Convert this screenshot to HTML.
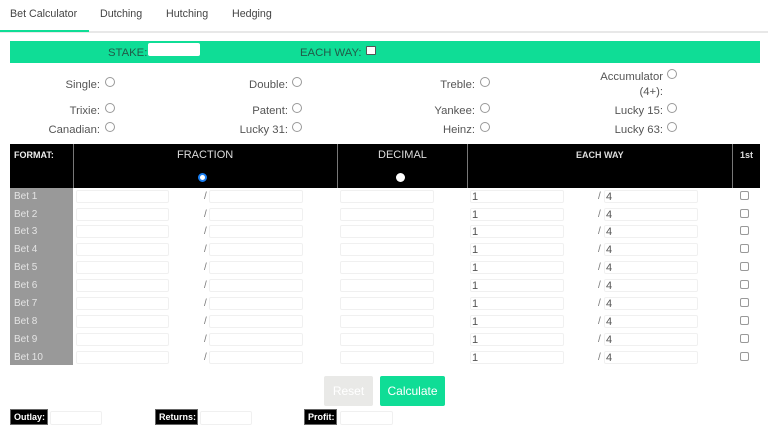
<!DOCTYPE html>
<html><head><meta charset="utf-8"><style>
html,body{margin:0;padding:0;background:#fff}
body{width:768px;height:444px;position:relative;overflow:hidden;font-family:"Liberation Sans",sans-serif;color:#555;font-size:11.5px}
.a{position:absolute;white-space:nowrap}
.r{text-align:right}
.rd{position:absolute;width:8px;height:8px;border:1px solid #999;border-radius:50%;background:#fff}
.row{position:absolute;left:0;width:768px;height:18px}
.i{position:absolute;top:0;height:11px;border:1px solid #f0f0f0;border-radius:2px;background:#fff;box-sizing:content-box;color:#555;font-size:11px;line-height:13px;padding-left:1px}
.i1{left:76px;width:90px}.i2{left:209px;width:91px}.i3{left:340px;width:91px}.i4{left:470px;width:91px}.i5{left:604px;width:91px}
.b{position:absolute;left:14px;top:0.5px;color:#e4e4e4;font-size:10px;line-height:12px}
.s1,.s2{position:absolute;top:1px;font-size:10px;line-height:12px;color:#777}
.s1{left:204px}.s2{left:598px}
.c{position:absolute;left:740px;top:1px;width:7px;height:7px;border:1px solid #999;border-radius:2px;background:#fff}
.sep{position:absolute;top:144px;width:1px;height:44px;background:#777}
.lab{position:absolute;top:409px;height:16px;background:#000;border:1px solid #666;box-sizing:border-box;color:#fff;font-weight:bold;font-size:9px;line-height:15px;padding-left:3px}
.out{position:absolute;top:411px;height:12px;border:1px solid #f0f0f0;border-radius:2px;background:#fff}
.t{font-size:10.7px;line-height:13px;color:#444;top:8px}
.l{line-height:14px;font-size:11.3px}
</style></head><body>
<div class="a t" style="left:10px">Bet Calculator</div>
<div class="a t" style="left:100px">Dutching</div>
<div class="a t" style="left:166px">Hutching</div>
<div class="a t" style="left:232px">Hedging</div>
<div class="a" style="left:0;top:31px;width:768px;height:2px;background:#e8e8e8"></div>
<div class="a" style="left:0;top:30px;width:89px;height:2px;background:#0fdd96"></div>

<div class="a" style="left:10px;top:41px;width:750px;height:22px;background:#0fdd96"></div>
<div class="a l" style="left:108px;top:46px;color:#225a48">STAKE:</div>
<div class="a" style="left:148px;top:43px;width:52px;height:13px;background:#fff;border-radius:2px"></div>
<div class="a l" style="left:300px;top:46px;color:#225a48">EACH WAY:</div>
<div class="a" style="left:366px;top:46px;width:8px;height:7px;background:#fff;border:1px solid #555;border-radius:1px"></div>

<div class="a r l" style="right:668px;top:78px">Single:</div><div class="rd" style="left:105px;top:77px"></div>
<div class="a r l" style="right:480px;top:78px">Double:</div><div class="rd" style="left:292px;top:77px"></div>
<div class="a r l" style="right:293px;top:78px">Treble:</div><div class="rd" style="left:480px;top:77px"></div>
<div class="a r l" style="right:105px;top:70px">Accumulator</div><div class="rd" style="left:667px;top:69px"></div>
<div class="a r l" style="right:105px;top:85px">(4+):</div>

<div class="a r l" style="right:668px;top:104px">Trixie:</div><div class="rd" style="left:105px;top:103px"></div>
<div class="a r l" style="right:480px;top:104px">Patent:</div><div class="rd" style="left:292px;top:103px"></div>
<div class="a r l" style="right:293px;top:104px">Yankee:</div><div class="rd" style="left:480px;top:103px"></div>
<div class="a r l" style="right:105px;top:104px">Lucky 15:</div><div class="rd" style="left:667px;top:103px"></div>

<div class="a r l" style="right:668px;top:123px">Canadian:</div><div class="rd" style="left:105px;top:122px"></div>
<div class="a r l" style="right:480px;top:123px">Lucky 31:</div><div class="rd" style="left:292px;top:122px"></div>
<div class="a r l" style="right:293px;top:123px">Heinz:</div><div class="rd" style="left:480px;top:122px"></div>
<div class="a r l" style="right:105px;top:123px">Lucky 63:</div><div class="rd" style="left:667px;top:122px"></div>

<div class="a" style="left:10px;top:144px;width:750px;height:44px;background:#000"></div>
<div class="sep" style="left:73px"></div><div class="sep" style="left:337px"></div><div class="sep" style="left:467px"></div><div class="sep" style="left:732px"></div>
<div class="a" style="left:14px;top:149px;color:#eee;font-weight:bold;font-size:9px;line-height:12px">FORMAT:</div>
<div class="a" style="left:177px;top:148px;color:#ddd;font-size:11px;line-height:14px">FRACTION</div>
<div class="a" style="left:378px;top:148px;color:#ddd;font-size:11px;line-height:14px">DECIMAL</div>
<div class="a" style="left:576px;top:149px;color:#ddd;font-weight:bold;font-size:9px;line-height:12px">EACH WAY</div>
<div class="a" style="left:740px;top:149px;color:#ddd;font-weight:bold;font-size:9px;line-height:12px">1st</div>
<div class="a" style="left:198px;top:173px;width:5px;height:5px;background:#fff;border:2px solid #1a7ef0;border-radius:50%"></div>
<div class="a" style="left:396px;top:173px;width:9px;height:9px;background:#fff;border-radius:50%"></div>

<div class="a" style="left:10px;top:188px;width:63px;height:177px;background:#999"></div>

<div class="row" style="top:190px"><div class="b">Bet 1</div><div class="i i1"></div><div class="s1">/</div><div class="i i2"></div><div class="i i3"></div><div class="i i4">1</div><div class="s2">/</div><div class="i i5">4</div><div class="c"></div></div>
<div class="row" style="top:208px"><div class="b">Bet 2</div><div class="i i1"></div><div class="s1">/</div><div class="i i2"></div><div class="i i3"></div><div class="i i4">1</div><div class="s2">/</div><div class="i i5">4</div><div class="c"></div></div>
<div class="row" style="top:225px"><div class="b">Bet 3</div><div class="i i1"></div><div class="s1">/</div><div class="i i2"></div><div class="i i3"></div><div class="i i4">1</div><div class="s2">/</div><div class="i i5">4</div><div class="c"></div></div>
<div class="row" style="top:243px"><div class="b">Bet 4</div><div class="i i1"></div><div class="s1">/</div><div class="i i2"></div><div class="i i3"></div><div class="i i4">1</div><div class="s2">/</div><div class="i i5">4</div><div class="c"></div></div>
<div class="row" style="top:261px"><div class="b">Bet 5</div><div class="i i1"></div><div class="s1">/</div><div class="i i2"></div><div class="i i3"></div><div class="i i4">1</div><div class="s2">/</div><div class="i i5">4</div><div class="c"></div></div>
<div class="row" style="top:279px"><div class="b">Bet 6</div><div class="i i1"></div><div class="s1">/</div><div class="i i2"></div><div class="i i3"></div><div class="i i4">1</div><div class="s2">/</div><div class="i i5">4</div><div class="c"></div></div>
<div class="row" style="top:297px"><div class="b">Bet 7</div><div class="i i1"></div><div class="s1">/</div><div class="i i2"></div><div class="i i3"></div><div class="i i4">1</div><div class="s2">/</div><div class="i i5">4</div><div class="c"></div></div>
<div class="row" style="top:315px"><div class="b">Bet 8</div><div class="i i1"></div><div class="s1">/</div><div class="i i2"></div><div class="i i3"></div><div class="i i4">1</div><div class="s2">/</div><div class="i i5">4</div><div class="c"></div></div>
<div class="row" style="top:333px"><div class="b">Bet 9</div><div class="i i1"></div><div class="s1">/</div><div class="i i2"></div><div class="i i3"></div><div class="i i4">1</div><div class="s2">/</div><div class="i i5">4</div><div class="c"></div></div>
<div class="row" style="top:351px"><div class="b">Bet 10</div><div class="i i1"></div><div class="s1">/</div><div class="i i2"></div><div class="i i3"></div><div class="i i4">1</div><div class="s2">/</div><div class="i i5">4</div><div class="c"></div></div>

<div class="a" style="left:324px;top:376px;width:49px;height:30px;background:#e9e9e7;border-radius:2px;color:#fff;text-align:center;line-height:30px;font-size:12px">Reset</div>
<div class="a" style="left:380px;top:376px;width:65px;height:30px;background:#0fdd96;border-radius:2px;color:#fff;text-align:center;line-height:30px;font-size:12px">Calculate</div>

<div class="lab" style="left:10px;width:38px">Outlay:</div><div class="out" style="left:50px;width:50px"></div>
<div class="lab" style="left:155px;width:43px">Returns:</div><div class="out" style="left:200px;width:50px"></div>
<div class="lab" style="left:304px;width:33px">Profit:</div><div class="out" style="left:340px;width:51px"></div>
</body></html>
